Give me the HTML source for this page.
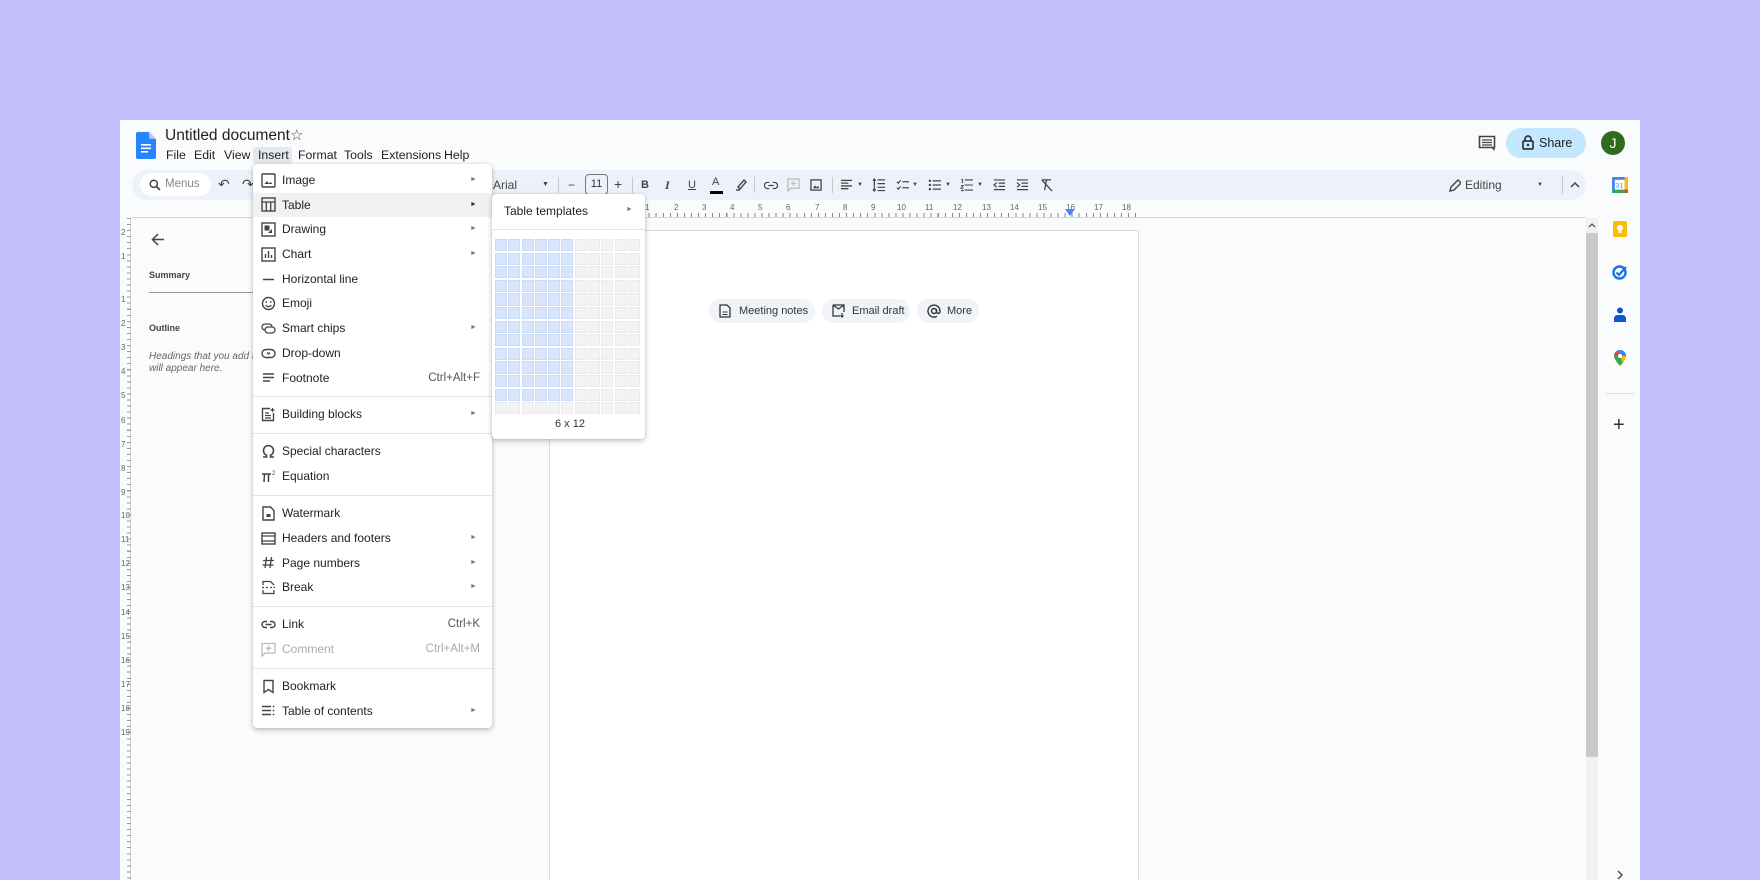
<!DOCTYPE html>
<html><head><meta charset="utf-8">
<style>
*{box-sizing:border-box;margin:0;padding:0}
body{width:1760px;height:880px;overflow:hidden;background:#c5befd;font-family:"Liberation Sans",sans-serif;color:#1f1f1f;position:relative}
.app{position:absolute;left:120px;top:120px;width:1520px;height:760px;background:#f9fbfd;overflow:hidden}
.abs{position:absolute}
.menubar span{position:absolute;top:28px;font-size:12.3px;color:#1f1f1f}
.tb{position:absolute;left:12px;top:50px;width:1454px;height:30px;background:#edf2fa;border-radius:15px}
.ti{position:absolute;top:8px;font-size:12px;color:#444}
.menu{position:absolute;left:253px;top:164px;width:239px;height:564px;background:#fff;border-radius:4px;box-shadow:0 2px 6px rgba(0,0,0,.25),0 0 1px rgba(0,0,0,.2);padding-top:4px;z-index:5}
.row{height:24.7px;position:relative;font-size:12px;line-height:24.7px;padding-left:29px}
.row svg{position:absolute;left:8px;top:4.8px}
.row .ar{position:absolute;left:217px;top:0;font-size:7px;color:#777}
.row .sc{position:absolute;right:12px;top:0;color:#555;font-size:11.5px}
.sep{height:12.3px;position:relative}
.sep:after{content:"";position:absolute;left:0;right:0;top:6px;height:1px;background:#e3e3e3}
.sub{position:absolute;left:492px;top:194px;width:153px;height:245px;background:#fff;border-radius:4px;box-shadow:0 2px 6px rgba(0,0,0,.25),0 0 1px rgba(0,0,0,.2);z-index:6}
.grid{position:absolute;left:3px;top:45px;display:grid;grid-template-columns:repeat(11,12px);grid-auto-rows:12.3px;gap:1.3px}
.grid i{display:block;background:#f3f3f3;border:1px solid #ebebeb}
.grid i.b{background:#d8e5fb;border-color:#c9dbf9}
.chip{position:absolute;top:179px;height:24px;border-radius:12px;background:#f0f4f9;font-size:11px;line-height:24px;color:#333;padding-left:30px}
.chip svg{position:absolute;left:10px;top:5px}
.rn{position:absolute;font-size:8px;color:#666}
</style></head><body>
<div class="app">
  <svg class="abs" style="left:16px;top:12px" width="20" height="27" viewBox="0 0 20 27"><path d="M2 0h11l7 7v18a2 2 0 0 1-2 2H2a2 2 0 0 1-2-2V2a2 2 0 0 1 2-2z" fill="#2684fc"/><path d="M13 0l7 7h-5a2 2 0 0 1-2-2z" fill="#a6c8ff"/><rect x="5" y="12" width="10" height="1.6" fill="#fff"/><rect x="5" y="15.5" width="10" height="1.6" fill="#fff"/><rect x="5" y="19" width="7" height="1.6" fill="#fff"/></svg>
  <div class="abs" style="left:45px;top:7px;font-size:15.5px;color:#1f1f1f">Untitled document</div>
  <div class="abs" style="left:170px;top:6px;font-size:15px;color:#444">☆</div>
  <div class="abs" style="left:133px;top:27px;width:39px;height:17px;background:#e4e7ec;border-radius:3px"></div>
  <div class="menubar">
    <span style="left:46px">File</span><span style="left:74px">Edit</span><span style="left:104px">View</span><span style="left:138px">Insert</span><span style="left:178px">Format</span><span style="left:224px">Tools</span><span style="left:261px">Extensions</span><span style="left:324px">Help</span>
  </div>
  <svg class="abs" style="left:1358px;top:15px" width="18" height="18" viewBox="0 0 18 18"><path d="M1.5 1.5h15v11h-15z" fill="none" stroke="#444" stroke-width="1.6"/><path d="M13 12.5l3.5 3.5v-3.5" fill="#444"/><path d="M4 5h10M4 7.5h10M4 10h10" stroke="#444" stroke-width="1.3"/></svg>
  <div class="abs" style="left:1386px;top:8px;width:80px;height:30px;border-radius:15px;background:#c2e7ff"></div>
  <svg class="abs" style="left:1402px;top:15px" width="12" height="15" viewBox="0 0 12 15"><rect x="1" y="6" width="10" height="8" rx="1" fill="none" stroke="#1f1f1f" stroke-width="1.5"/><path d="M3 6V4a3 3 0 0 1 6 0v2" fill="none" stroke="#1f1f1f" stroke-width="1.5"/><circle cx="6" cy="10" r="1.2" fill="#1f1f1f"/></svg>
  <div class="abs" style="left:1419px;top:16px;font-size:12.5px;color:#1f1f1f">Share</div>
  <div class="abs" style="left:1481px;top:11px;width:24px;height:24px;border-radius:12px;background:#2e6b1c;color:#fff;font-size:14px;text-align:center;line-height:24px">J</div>

  <div class="tb">
    <div class="abs" style="left:8px;top:3px;width:71px;height:23px;background:#fff;border-radius:12px"></div>
    <svg class="abs" style="left:17px;top:9px" width="12" height="12" viewBox="0 0 12 12"><circle cx="4.8" cy="4.8" r="3.6" fill="none" stroke="#444" stroke-width="1.5"/><path d="M7.5 7.5L11 11" stroke="#444" stroke-width="1.6"/></svg>
    <div class="ti" style="left:33px;color:#888;font-size:11.5px;top:8px">Menus</div>
    <div class="ti" style="left:86px;font-size:14px;top:6px">↶</div>
    <div class="ti" style="left:110px;font-size:14px;top:6px">↷</div>
    <div class="ti" style="left:361px">Arial</div>
    <div class="ti" style="left:410px;font-size:7px;top:11px">▼</div>
    <div class="abs" style="left:426px;top:7px;width:1px;height:16px;background:#c7c7c7"></div>
    <div class="ti" style="left:436px">−</div>
    <div class="abs" style="left:453px;top:4px;width:23px;height:21px;border:1px solid #777;border-radius:4px;font-size:11px;text-align:center;line-height:19px;color:#333">11</div>
    <div class="ti" style="left:482px;font-size:14px;top:6px">+</div>
    <div class="abs" style="left:500px;top:7px;width:1px;height:16px;background:#c7c7c7"></div>
    <div class="ti" style="left:509px;font-weight:bold;font-size:11px;top:9px">B</div>
    <div class="ti" style="left:533px;font-style:italic;font-family:'Liberation Serif';font-weight:bold;font-size:12px">I</div>
    <div class="ti" style="left:556px;text-decoration:underline;font-size:11px;top:9px">U</div>
    <div class="ti" style="left:580px;font-size:11px;top:6px">A</div>
    <div class="abs" style="left:578px;top:21px;width:13px;height:3px;background:#000"></div>
    <svg class="abs" style="left:603px;top:8px" width="12" height="13" viewBox="0 0 12 13"><path d="M3 9l6-7 2 2-6 7z" fill="none" stroke="#444" stroke-width="1.4"/><path d="M1 12h4" stroke="#444" stroke-width="1.4"/></svg>
    <div class="abs" style="left:622px;top:7px;width:1px;height:16px;background:#c7c7c7"></div>
    <svg class="abs" style="left:632px;top:11px" width="14" height="9" viewBox="0 0 16 10"><path d="M6 1.5H4a3.5 3.5 0 0 0 0 7h2M10 1.5h2a3.5 3.5 0 0 1 0 7h-2M5 5h6" fill="none" stroke="#444" stroke-width="1.4"/></svg>
    <svg class="abs" style="left:655px;top:8px" width="13" height="14" viewBox="0 0 14 15"><path d="M1 1h12v10H4l-3 3z" fill="none" stroke="#bbb" stroke-width="1.3"/><path d="M7 3.5v5M4.5 6h5" stroke="#bbb" stroke-width="1.3"/></svg>
    <svg class="abs" style="left:678px;top:9px" width="12" height="12" viewBox="0 0 13 13"><rect x="1" y="1" width="11" height="11" fill="none" stroke="#444" stroke-width="1.4"/><path d="M3 10l2.5-3 2 2 1.5-1.5L10 10z" fill="#444"/></svg>
    <div class="abs" style="left:700px;top:7px;width:1px;height:16px;background:#c7c7c7"></div>
    <svg class="abs" style="left:708px;top:9px" width="13" height="12" viewBox="0 0 14 13"><path d="M1 1.5h12M1 4.5h8M1 7.5h12M1 10.5h8" stroke="#444" stroke-width="1.4"/></svg>
    <div class="ti" style="left:725px;font-size:6px;top:12px">▼</div>
    <svg class="abs" style="left:740px;top:8px" width="13" height="14" viewBox="0 0 14 15"><path d="M6 2h8M6 6h8M6 10h8M6 13.5h8M2.5 1v13M1 3l1.5-2 1.5 2M1 12l1.5 2 1.5-2" fill="none" stroke="#444" stroke-width="1.3"/></svg>
    <svg class="abs" style="left:764px;top:9px" width="13" height="12" viewBox="0 0 14 13"><path d="M1 3l1.5 1.5L5 1.5M1 9.5l1.5 1.5L5 8M7 3h7M7 9.5h7" fill="none" stroke="#444" stroke-width="1.3"/></svg>
    <div class="ti" style="left:780px;font-size:6px;top:12px">▼</div>
    <svg class="abs" style="left:796px;top:9px" width="13" height="12" viewBox="0 0 14 13"><circle cx="2" cy="2" r="1.3" fill="#444"/><circle cx="2" cy="6.5" r="1.3" fill="#444"/><circle cx="2" cy="11" r="1.3" fill="#444"/><path d="M5 2h9M5 6.5h9M5 11h9" stroke="#444" stroke-width="1.3"/></svg>
    <div class="ti" style="left:813px;font-size:6px;top:12px">▼</div>
    <svg class="abs" style="left:828px;top:8px" width="13" height="14" viewBox="0 0 14 15"><path d="M1.5 1.5h1v4M1 13.5h3M5 2h9M5 7.5h9M5 13h9" fill="none" stroke="#444" stroke-width="1.2"/><path d="M1 8h2.5L1 11h3" fill="none" stroke="#444" stroke-width="1"/></svg>
    <div class="ti" style="left:845px;font-size:6px;top:12px">▼</div>
    <svg class="abs" style="left:861px;top:9px" width="13" height="12" viewBox="0 0 14 13"><path d="M1 1h12M6 4.5h7M6 8h7M1 11.5h12M4 4l-3 2.5 3 2.5" fill="none" stroke="#444" stroke-width="1.3"/></svg>
    <svg class="abs" style="left:884px;top:9px" width="13" height="12" viewBox="0 0 14 13"><path d="M1 1h12M6 4.5h7M6 8h7M1 11.5h12M1 4l3 2.5-3 2.5" fill="none" stroke="#444" stroke-width="1.3"/></svg>
    <svg class="abs" style="left:908px;top:8px" width="13" height="14" viewBox="0 0 14 15"><path d="M2 2h10M7 2L5 13M2 2l11 12" fill="none" stroke="#444" stroke-width="1.4"/></svg>
    <svg class="abs" style="left:1317px;top:9px" width="12" height="13" viewBox="0 0 12 13"><path d="M1 12l1-4 7-7 3 3-7 7z" fill="none" stroke="#444" stroke-width="1.4"/></svg>
    <div class="ti" style="left:1333px;font-size:12px">Editing</div>
    <div class="ti" style="left:1405px;font-size:6px;top:12px">▼</div>
    <div class="abs" style="left:1430px;top:6px;width:1px;height:18px;background:#c7c7c7"></div>
    <svg class="abs" style="left:1438px;top:11px" width="10" height="7" viewBox="0 0 10 7"><path d="M1 6l4-4 4 4" fill="none" stroke="#444" stroke-width="1.5"/></svg>
  </div>

  <div class="abs" style="left:430px;top:87px;width:590px;height:10px;background:repeating-linear-gradient(90deg,#888 0 1px,transparent 1px 7.05px);clip-path:inset(6px 0 0 0)"></div>
  <div class="abs" style="left:12px;top:97px;width:1454px;height:1px;background:#d6d6d6"></div>
  <div style="position:absolute;left:0;top:0">
    <span class="rn" style="left:525px;top:83px">1</span><span class="rn" style="left:554px;top:83px">2</span><span class="rn" style="left:582px;top:83px">3</span><span class="rn" style="left:610px;top:83px">4</span><span class="rn" style="left:638px;top:83px">5</span><span class="rn" style="left:666px;top:83px">6</span><span class="rn" style="left:695px;top:83px">7</span><span class="rn" style="left:723px;top:83px">8</span><span class="rn" style="left:751px;top:83px">9</span><span class="rn" style="left:777px;top:83px">10</span><span class="rn" style="left:805px;top:83px">11</span><span class="rn" style="left:833px;top:83px">12</span><span class="rn" style="left:862px;top:83px">13</span><span class="rn" style="left:890px;top:83px">14</span><span class="rn" style="left:918px;top:83px">15</span><span class="rn" style="left:946px;top:83px">16</span><span class="rn" style="left:974px;top:83px">17</span><span class="rn" style="left:1002px;top:83px">18</span>
  </div>
  <div class="abs" style="left:945px;top:89px;width:0;height:0;border-left:5px solid transparent;border-right:5px solid transparent;border-top:7px solid #4285f4"></div>

  <div class="abs" style="left:0;top:98px;width:11px;height:662px;background:#f9fbfd;border-right:1px solid #d6d6d6"></div>
  <div class="abs" style="left:7px;top:98px;width:4px;height:662px;background:repeating-linear-gradient(180deg,#999 0 1px,transparent 1px 6.05px)"></div>
  <div style="position:absolute;left:1px;top:0;font-size:8px;color:#666;line-height:8px">
    <span class="rn" style="top:109px">2</span><span class="rn" style="top:133px">1</span><span class="rn" style="top:176px">1</span><span class="rn" style="top:200px">2</span><span class="rn" style="top:224px">3</span><span class="rn" style="top:248px">4</span><span class="rn" style="top:272px">5</span><span class="rn" style="top:297px">6</span><span class="rn" style="top:321px">7</span><span class="rn" style="top:345px">8</span><span class="rn" style="top:369px">9</span><span class="rn" style="top:392px">10</span><span class="rn" style="top:416px">11</span><span class="rn" style="top:440px">12</span><span class="rn" style="top:464px">13</span><span class="rn" style="top:489px">14</span><span class="rn" style="top:513px">15</span><span class="rn" style="top:537px">16</span><span class="rn" style="top:561px">17</span><span class="rn" style="top:585px">18</span><span class="rn" style="top:609px">19</span>
  </div>

  <svg class="abs" style="left:31px;top:113px" width="14" height="13" viewBox="0 0 14 13"><path d="M13 6.5H2M7 1L1.5 6.5 7 12" fill="none" stroke="#444" stroke-width="1.5"/></svg>
  <div class="abs" style="left:29px;top:150px;font-size:9px;color:#444;font-weight:bold">Summary</div>
  <div class="abs" style="left:29px;top:172px;width:110px;height:1px;background:#999"></div>
  <div class="abs" style="left:29px;top:203px;font-size:9px;color:#444;font-weight:bold">Outline</div>
  <div class="abs" style="left:29px;top:231px;font-size:10px;color:#666;font-style:italic;line-height:12px;white-space:nowrap">Headings that you add to the document<br>will appear here.</div>

  <div class="abs" style="left:429px;top:110px;width:590px;height:660px;background:#fff;border:1px solid #dadce0"></div>
  <div class="chip" style="left:589px;width:106px"><svg width="12" height="14" viewBox="0 0 12 14"><path d="M1 1h7l3 3v9H1z" fill="none" stroke="#333" stroke-width="1.3"/><path d="M3.5 8h5M3.5 10.5h5" stroke="#333" stroke-width="1.1"/></svg>Meeting notes</div>
  <div class="chip" style="left:702px;width:88px"><svg width="14" height="14" viewBox="0 0 14 14"><path d="M1 1h11v7M8 12H1V1" fill="none" stroke="#333" stroke-width="1.3"/><path d="M1 1l5.5 4L12 1M10 9v4M8.5 11.5l1.5 1.5 1.5-1.5" fill="none" stroke="#333" stroke-width="1.2"/></svg>Email draft</div>
  <div class="chip" style="left:797px;width:62px"><svg width="14" height="14" viewBox="0 0 14 14"><circle cx="7" cy="7" r="2.5" fill="none" stroke="#333" stroke-width="1.4"/><path d="M9.5 5v3a1.8 1.8 0 0 0 3.5 0V7A6 6 0 1 0 10 12.3" fill="none" stroke="#333" stroke-width="1.4"/></svg>More</div>

  <div class="abs" style="left:1466px;top:98px;width:12px;height:662px;background:#f1f1f1"></div>
  <div class="abs" style="left:1466px;top:113px;width:12px;height:524px;background:#cacaca"></div>
  <svg class="abs" style="left:1468px;top:102px" width="8" height="6" viewBox="0 0 8 6"><path d="M1 5l3-3 3 3" fill="none" stroke="#555" stroke-width="1.3"/></svg>

  <svg class="abs" style="left:1492px;top:57px" width="16" height="16" viewBox="0 0 14 14"><rect width="14" height="14" rx="1" fill="#4285f4"/><rect x="0" y="11" width="11" height="3" fill="#34a853"/><rect x="11" y="0" width="3" height="11" fill="#fbbc04"/><rect x="11" y="11" width="3" height="3" fill="#ea4335"/><rect x="2.5" y="2.5" width="8.5" height="8.5" fill="#fff"/><text x="3.2" y="9.3" font-size="6" fill="#4285f4" font-family="Liberation Sans">31</text></svg>
  <svg class="abs" style="left:1493px;top:101px" width="14" height="16" viewBox="0 0 14 16"><rect width="14" height="16" rx="1.5" fill="#fbbc04"/><circle cx="7" cy="7" r="3" fill="#fff"/><rect x="5.5" y="10" width="3" height="2" fill="#fff"/></svg>
  <svg class="abs" style="left:1492px;top:144px" width="16" height="16" viewBox="0 0 16 16"><circle cx="7.5" cy="8.5" r="6" fill="none" stroke="#1a73e8" stroke-width="2.4"/><path d="M4.5 8.5l2.5 2.5 7-8" fill="none" stroke="#1a73e8" stroke-width="2.2"/></svg>
  <svg class="abs" style="left:1494px;top:187px" width="12" height="15" viewBox="0 0 12 15"><circle cx="6" cy="3.5" r="3" fill="#0b57d0"/><path d="M0 15v-3.5a3.5 3.5 0 0 1 3.5-3.5h5a3.5 3.5 0 0 1 3.5 3.5V15z" fill="#0b57d0"/></svg>
  <svg class="abs" style="left:1494px;top:230px" width="12" height="16" viewBox="0 0 12 16"><path d="M6 16C6 16 0 9.5 0 6a6 6 0 0 1 12 0c0 3.5-6 10-6 10z" fill="#34a853"/><path d="M0 6a6 6 0 0 1 3-5.2L6 6z" fill="#ea4335"/><path d="M3 .8A6 6 0 0 1 12 6H6z" fill="#4285f4"/><path d="M12 6c0 2-2 4.5-3.5 6.5L6 6z" fill="#fbbc04"/><circle cx="6" cy="6" r="2" fill="#fff"/></svg>
  <div class="abs" style="left:1486px;top:273px;width:28px;height:1px;background:#dadce0"></div>
  <div class="abs" style="left:1493px;top:295px;font-size:20px;color:#333;line-height:20px">+</div>
  <svg class="abs" style="left:1497px;top:750px" width="7" height="10" viewBox="0 0 7 10"><path d="M1 1l4 4-4 4" fill="none" stroke="#444" stroke-width="1.4"/></svg>
</div>

<div class="menu">
  <div class="row"><svg width="15" height="15" viewBox="0 0 15 15"><rect x="1" y="1" width="13" height="13" rx="1" fill="none" stroke="#444" stroke-width="1.4"/><path d="M3.5 11l2.5-3 2 2.5 1.5-1.5 2 2z" fill="#444"/></svg>Image<span class="ar">►</span></div>
  <div class="row" style="background:#f1f1f1"><svg width="15" height="15" viewBox="0 0 15 15"><rect x="1" y="1" width="13" height="13" fill="none" stroke="#444" stroke-width="1.4"/><path d="M1 5h13M5.3 5v9M9.7 5v9" stroke="#444" stroke-width="1.3"/></svg>Table<span class="ar" style="color:#333">►</span></div>
  <div class="row"><svg width="15" height="15" viewBox="0 0 15 15"><rect x="1" y="1" width="13" height="13" fill="none" stroke="#444" stroke-width="1.4"/><rect x="3.5" y="3.5" width="5" height="5" fill="#444"/><path d="M7 11l4-4v4z" fill="#444"/></svg>Drawing<span class="ar">►</span></div>
  <div class="row"><svg width="15" height="15" viewBox="0 0 15 15"><rect x="1" y="1" width="13" height="13" fill="none" stroke="#444" stroke-width="1.4"/><path d="M4.5 11V7M7.5 11V4M10.5 11V8" stroke="#444" stroke-width="1.4"/></svg>Chart<span class="ar">►</span></div>
  <div class="row"><svg width="15" height="15" viewBox="0 0 15 15"><path d="M2 7.5h11" stroke="#444" stroke-width="1.5"/></svg>Horizontal line</div>
  <div class="row"><svg width="15" height="15" viewBox="0 0 15 15"><circle cx="7.5" cy="7.5" r="6" fill="none" stroke="#444" stroke-width="1.4"/><circle cx="5.3" cy="6" r=".9" fill="#444"/><circle cx="9.7" cy="6" r=".9" fill="#444"/><path d="M4.8 9a3 3 0 0 0 5.4 0" fill="none" stroke="#444" stroke-width="1.3"/></svg>Emoji</div>
  <div class="row"><svg width="15" height="15" viewBox="0 0 15 15"><rect x="1" y="3" width="10" height="6" rx="3" fill="none" stroke="#444" stroke-width="1.3"/><rect x="4" y="6" width="10" height="6" rx="3" fill="#fff" stroke="#444" stroke-width="1.3"/></svg>Smart chips<span class="ar">►</span></div>
  <div class="row"><svg width="15" height="15" viewBox="0 0 15 15"><rect x="1" y="3.5" width="13" height="8" rx="4" fill="none" stroke="#444" stroke-width="1.4"/><path d="M6 6.5l1.5 1.5L9 6.5" fill="none" stroke="#444" stroke-width="1.3"/></svg>Drop-down</div>
  <div class="row"><svg width="15" height="15" viewBox="0 0 15 15"><path d="M2 4h11M2 7.5h11M2 11h7" stroke="#444" stroke-width="1.4"/></svg>Footnote<span class="sc">Ctrl+Alt+F</span></div>
  <div class="sep"></div>
  <div class="row"><svg width="15" height="15" viewBox="0 0 15 15"><path d="M9 1.5H1.5v12h11V6" fill="none" stroke="#444" stroke-width="1.4"/><path d="M4 6h4M4 8.5h6M4 11h6M11.5 1v4M9.5 3h4" stroke="#444" stroke-width="1.2"/></svg>Building blocks<span class="ar">►</span></div>
  <div class="sep"></div>
  <div class="row"><svg width="15" height="15" viewBox="0 0 15 15"><path d="M2 13h3.5v-1.8A5 5 0 1 1 9.5 11.2V13H13" fill="none" stroke="#444" stroke-width="1.6"/></svg>Special characters</div>
  <div class="row"><svg width="15" height="15" viewBox="0 0 15 15"><path d="M1 5h9M3.5 5L3 13M7.5 5v8" fill="none" stroke="#444" stroke-width="1.5"/><text x="11" y="6" font-size="6" fill="#444" font-family="Liberation Sans">2</text></svg>Equation</div>
  <div class="sep"></div>
  <div class="row"><svg width="15" height="15" viewBox="0 0 15 15"><path d="M2 1h7.5l3.5 3.5V14H2z" fill="none" stroke="#444" stroke-width="1.4"/><rect x="5.5" y="8" width="4" height="3" fill="#444"/></svg>Watermark</div>
  <div class="row"><svg width="15" height="15" viewBox="0 0 15 15"><rect x="1" y="2" width="13" height="11" fill="none" stroke="#444" stroke-width="1.4"/><path d="M1 5h13M1 10h13" stroke="#444" stroke-width="1.3"/></svg>Headers and footers<span class="ar">►</span></div>
  <div class="row"><svg width="15" height="15" viewBox="0 0 15 15"><path d="M5.5 2L4 13M10.5 2L9 13M2 5.5h11M1.5 10h11" stroke="#444" stroke-width="1.3"/></svg>Page numbers<span class="ar">►</span></div>
  <div class="row"><svg width="15" height="15" viewBox="0 0 15 15"><path d="M2 5V1.5h7.5L13 5M2 10v3.5h11V10M1 7.5h2M5 7.5h2M9 7.5h2M12.5 7.5h1.5" fill="none" stroke="#444" stroke-width="1.3"/></svg>Break<span class="ar">►</span></div>
  <div class="sep"></div>
  <div class="row"><svg width="15" height="15" viewBox="0 0 15 15"><path d="M6 4.5H4a3 3 0 0 0 0 6h2M9 4.5h2a3 3 0 0 1 0 6H9M4.5 7.5h6" fill="none" stroke="#444" stroke-width="1.4"/></svg>Link<span class="sc">Ctrl+K</span></div>
  <div class="row" style="color:#aaa"><svg width="15" height="15" viewBox="0 0 15 15"><path d="M1 1.5h13V11H4l-3 3z" fill="none" stroke="#bbb" stroke-width="1.3"/><path d="M7.5 3.5v5.5M4.8 6.2h5.4" stroke="#bbb" stroke-width="1.3"/></svg>Comment<span class="sc" style="color:#aaa">Ctrl+Alt+M</span></div>
  <div class="sep"></div>
  <div class="row"><svg width="15" height="15" viewBox="0 0 15 15"><path d="M3 1.5h9v12L7.5 10.5 3 13.5z" fill="none" stroke="#444" stroke-width="1.4"/></svg>Bookmark</div>
  <div class="row"><svg width="15" height="15" viewBox="0 0 15 15"><path d="M1 3.5h9M1 7.5h9M1 11.5h9" stroke="#444" stroke-width="1.4"/><circle cx="12.5" cy="3.5" r=".9" fill="#444"/><circle cx="12.5" cy="7.5" r=".9" fill="#444"/><circle cx="12.5" cy="11.5" r=".9" fill="#444"/></svg>Table of contents<span class="ar">►</span></div>
</div>

<div class="sub">
  <div class="abs" style="left:12px;top:10px;font-size:12px;color:#1f1f1f">Table templates</div>
  <div class="abs" style="left:134px;top:12px;font-size:7px;color:#777">►</div>
  <div class="abs" style="left:0;right:0;top:35px;height:1px;background:#e3e3e3"></div>
  <div class="grid">
    <i class="b"></i><i class="b"></i><i class="b"></i><i class="b"></i><i class="b"></i><i class="b"></i><i></i><i></i><i></i><i></i><i></i>
    <i class="b"></i><i class="b"></i><i class="b"></i><i class="b"></i><i class="b"></i><i class="b"></i><i></i><i></i><i></i><i></i><i></i>
    <i class="b"></i><i class="b"></i><i class="b"></i><i class="b"></i><i class="b"></i><i class="b"></i><i></i><i></i><i></i><i></i><i></i>
    <i class="b"></i><i class="b"></i><i class="b"></i><i class="b"></i><i class="b"></i><i class="b"></i><i></i><i></i><i></i><i></i><i></i>
    <i class="b"></i><i class="b"></i><i class="b"></i><i class="b"></i><i class="b"></i><i class="b"></i><i></i><i></i><i></i><i></i><i></i>
    <i class="b"></i><i class="b"></i><i class="b"></i><i class="b"></i><i class="b"></i><i class="b"></i><i></i><i></i><i></i><i></i><i></i>
    <i class="b"></i><i class="b"></i><i class="b"></i><i class="b"></i><i class="b"></i><i class="b"></i><i></i><i></i><i></i><i></i><i></i>
    <i class="b"></i><i class="b"></i><i class="b"></i><i class="b"></i><i class="b"></i><i class="b"></i><i></i><i></i><i></i><i></i><i></i>
    <i class="b"></i><i class="b"></i><i class="b"></i><i class="b"></i><i class="b"></i><i class="b"></i><i></i><i></i><i></i><i></i><i></i>
    <i class="b"></i><i class="b"></i><i class="b"></i><i class="b"></i><i class="b"></i><i class="b"></i><i></i><i></i><i></i><i></i><i></i>
    <i class="b"></i><i class="b"></i><i class="b"></i><i class="b"></i><i class="b"></i><i class="b"></i><i></i><i></i><i></i><i></i><i></i>
    <i class="b"></i><i class="b"></i><i class="b"></i><i class="b"></i><i class="b"></i><i class="b"></i><i></i><i></i><i></i><i></i><i></i>
    <i></i><i></i><i></i><i></i><i></i><i></i><i></i><i></i><i></i><i></i><i></i>
  </div>
  <div class="abs" style="left:63px;top:224px;font-size:11px;color:#333">6 x 12</div>
</div>
</body></html>
